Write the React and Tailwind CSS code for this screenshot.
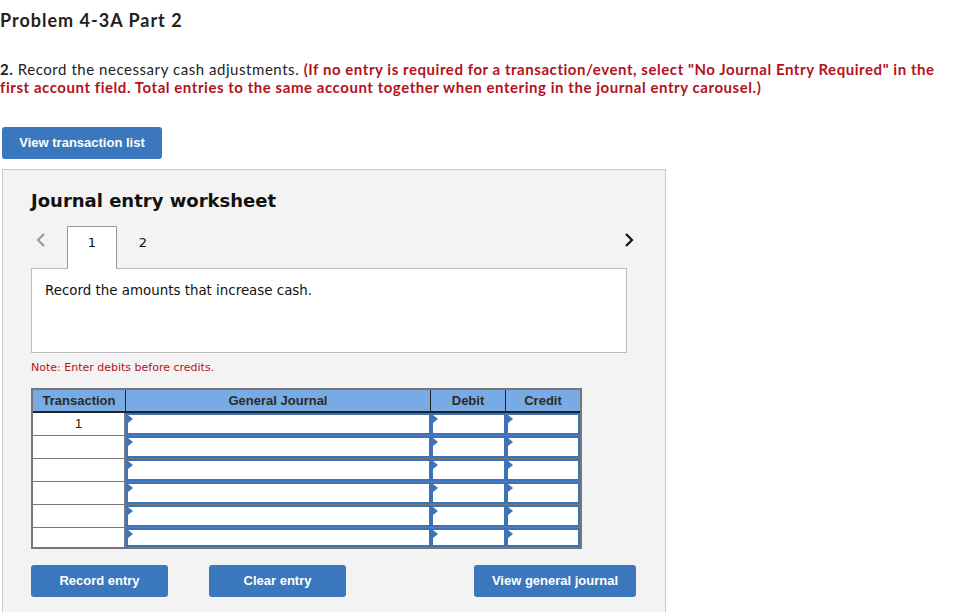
import React from 'react';

const rows = [
  { t: '1', h: 'h-[22px]' },
  { t: '', h: 'h-[22px]' },
  { t: '', h: 'h-[22px]' },
  { t: '', h: 'h-[22px]' },
  { t: '', h: 'h-[22px]' },
  { t: '', h: 'h-[19px]' },
];

// blue-bordered input cell with the little marker in its corner
const InputCell = ({ h }) => (
  <div className={`relative ${h} bg-white border-2 border-[#3d73b6]`}>
    <span className="absolute left-0 top-0 w-0 h-0 border-y-[4px] border-y-transparent border-l-[5px] border-l-[#3d73b6]" />
  </div>
);

const BlueButton = ({ children, className = '' }) => (
  <button
    className={`h-8 rounded-[3px] bg-[#3a77bd] text-white text-[13px] font-bold ${className}`}
    style={{ fontFamily: '"Liberation Sans", Arial, sans-serif' }}
  >
    {children}
  </button>
);

export default function App() {
  return (
    <div className="w-[960px] h-[612px] overflow-hidden bg-white text-[#222]">
      <h1 className="pt-[9px] text-[18px] font-bold leading-[22px] tracking-[1px] text-[#222]" style={{ fontFamily: 'Lato, "Open Sans", sans-serif' }}>
        Problem 4-3A Part 2
      </h1>

      <p className="mt-[29px] text-[15px] leading-[18px] tracking-[0.55px]" style={{ fontFamily: 'Lato, "Open Sans", sans-serif' }}>
        <span className="font-bold">2.</span> Record the necessary cash adjustments.{' '}
        <span className="font-bold text-[#b3121c]">
          (If no entry is required for a transaction/event, select "No Journal Entry Required" in the first account field. Total entries to the same account together when entering in the journal entry carousel.)
        </span>
      </p>

      <div className="mt-[31px] pl-[2px]">
        <BlueButton className="w-[160px]">View transaction list</BlueButton>
      </div>

      <div className="ml-[2px] mt-[10px] w-[664px] h-[460px] bg-[#f3f3f3] border border-[#c8c8c8] pl-[28px]" style={{ fontFamily: '"DejaVu Sans", Verdana, sans-serif' }}>
        <h2 className="mt-[19px] text-[18px] font-bold leading-[24px] text-[#111]">Journal entry worksheet</h2>

        <div className="mt-[13px] flex items-start w-[596px] h-[42px]">
          <span className="w-[36px] pl-[4px] mt-[6px] flex items-center">
            <svg width="12" height="16" viewBox="0 0 12 16"><path d="M9 2 L3 8 L9 14" fill="none" stroke="#999" strokeWidth="2.2" /></svg>
          </span>
          <div className="relative z-10 w-[50px] h-[43px] bg-white border border-[#999] border-b-0 pt-[7px] text-center leading-[18px] text-[13px] text-[#111]">
            1
          </div>
          <div className="w-[52px] pt-[8px] text-center leading-[18px] text-[13px] text-[#111]">2</div>
          <div className="flex-1" />
          <span className="mr-[-8px] mt-[6px] flex items-center">
            <svg width="12" height="16" viewBox="0 0 12 16"><path d="M3 2 L9 8 L3 14" fill="none" stroke="#111" strokeWidth="2.2" /></svg>
          </span>
        </div>

        <div className="w-[596px] h-[85px] bg-white border border-[#bbb] px-[13px] pt-[12px] text-[13.4px] text-[#111]">
          Record the amounts that increase cash.
        </div>

        <p className="mt-[8px] text-[11px] leading-[14px] text-[#b3121c]">Note: Enter debits before credits.</p>

        <div className="mt-[13px] w-[551px] border-2 border-[#777]" style={{ fontFamily: '"Liberation Sans", Arial, sans-serif' }}>
          <div className="grid grid-cols-[93px_305px_75px_74px] h-[23px] bg-[#78abe3] border-b-2 border-[#222] text-[13px] font-bold text-[#2a2a2a]">
            <div className="flex items-center justify-center border-r border-[#222]">Transaction</div>
            <div className="flex items-center justify-center border-r border-[#222]">General Journal</div>
            <div className="flex items-center justify-center border-r border-[#222]">Debit</div>
            <div className="flex items-center justify-center">Credit</div>
          </div>
          {rows.map((r, i) => (
            <div key={i} className={`grid grid-cols-[93px_305px_75px_74px] ${i < rows.length - 1 ? 'border-b border-[#777]' : ''}`}>
              <div className={`${r.h} flex items-center justify-center text-[13px] text-[#222] border-r-2 border-[#777] bg-white`}>{r.t}</div>
              <InputCell h={r.h} />
              <InputCell h={r.h} />
              <InputCell h={r.h} />
            </div>
          ))}
        </div>

        <div className="mt-[16px] flex items-center w-[605px]">
          <BlueButton className="w-[137px]">Record entry</BlueButton>
          <BlueButton className="ml-[41px] w-[137px]">Clear entry</BlueButton>
          <div className="flex-1" />
          <BlueButton className="w-[162px]">View general journal</BlueButton>
        </div>
      </div>
    </div>
  );
}
